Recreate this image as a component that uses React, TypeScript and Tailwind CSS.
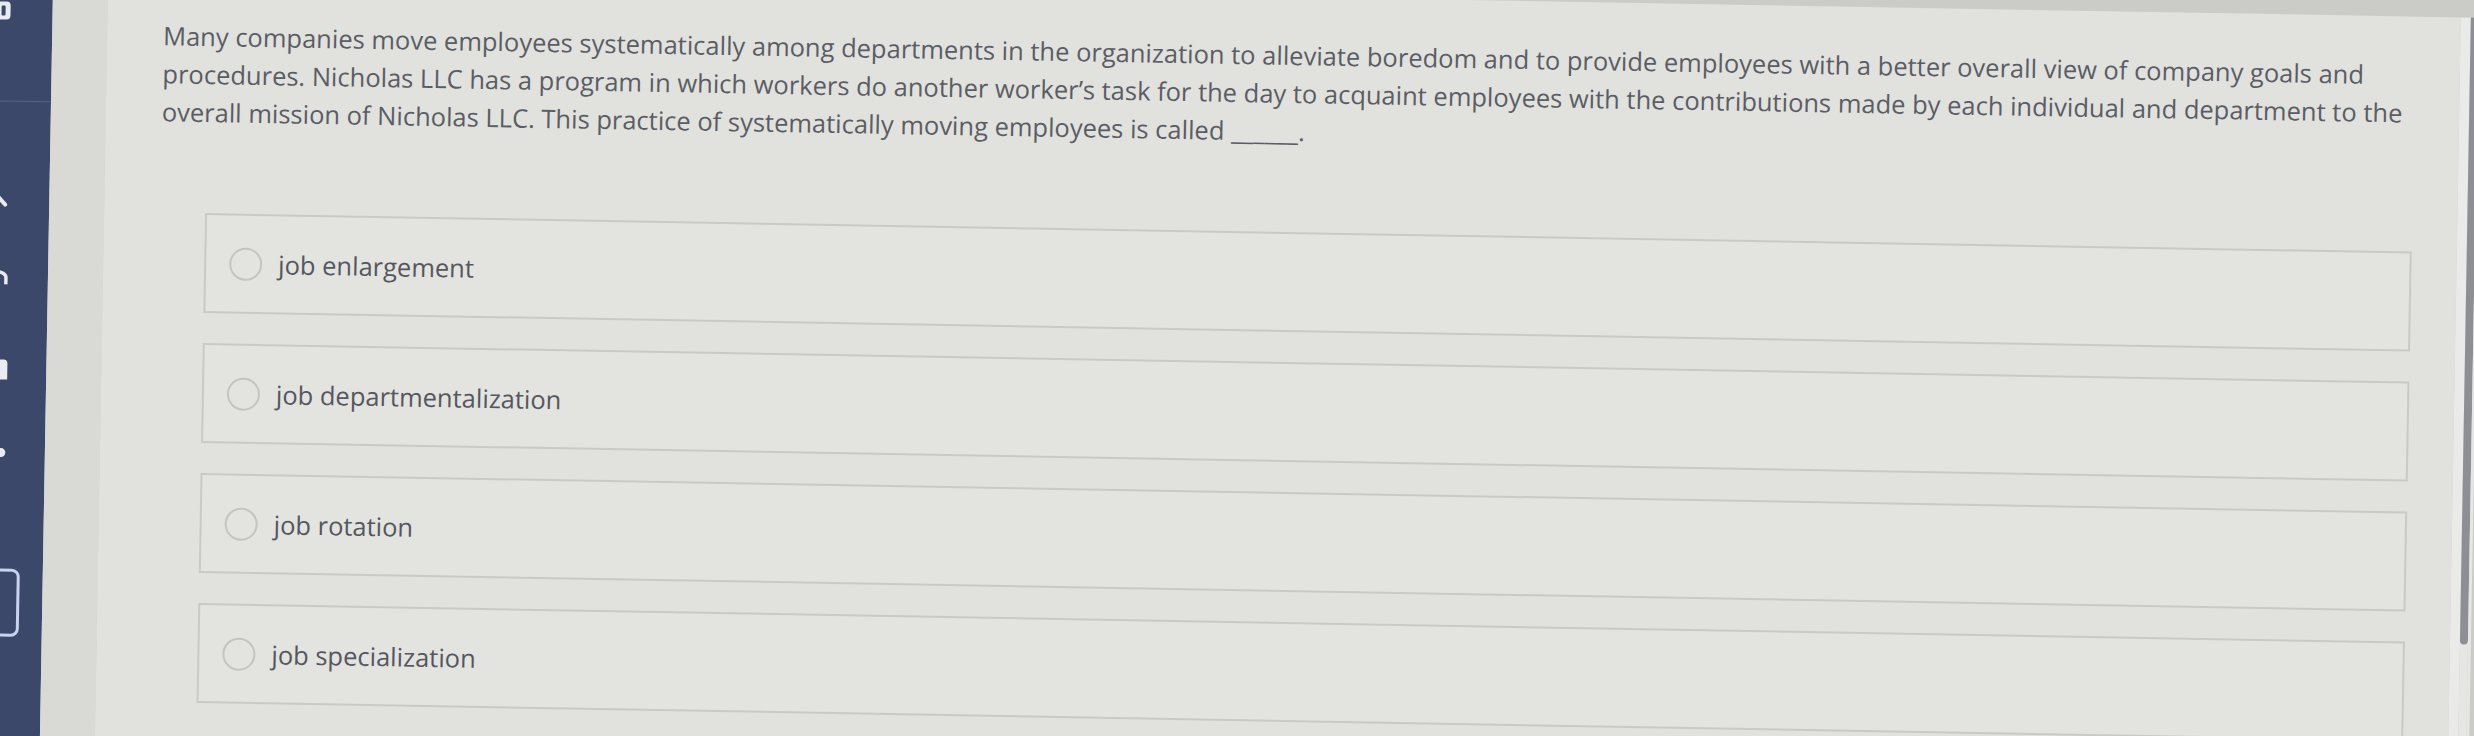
const options = [
  'job enlargement',
  'job departmentalization',
  'job rotation',
  'job specialization',
];

function Sidebar() {
  return (
    <nav className="flex w-[93px] shrink-0 flex-col bg-[#3b486a]">
      <div className="h-[127px] border-b border-[#56648a] pt-[26px]">
        <svg className="ml-[28px]" width="24" height="20" viewBox="0 0 24 20">
          <rect x="1" y="1" width="22" height="18" rx="4" fill="#e8ebf2" />
          <rect x="14" y="5" width="4" height="10" rx="1" fill="#3b486a" />
        </svg>
      </div>
      <svg className="ml-[22px] mt-[86px]" width="30" height="20" viewBox="0 0 30 20">
        <path d="M3 17 L15 4 L27 17" fill="none" stroke="#e8ebf2" strokeWidth="4" strokeLinecap="round" />
      </svg>
      <svg className="ml-[28px] mt-[61px]" width="26" height="16" viewBox="0 0 26 16">
        <path d="M3 16 V9 a10 6 0 0 1 20 0 V16" fill="none" stroke="#e8ebf2" strokeWidth="3.5" />
      </svg>
      <svg className="ml-[34px] mt-[71px]" width="22" height="28" viewBox="0 0 22 28">
        <path d="M2 4 H16 a4 4 0 0 1 4 4 V24 H12 V12 H2 Z" fill="#e8ebf2" />
      </svg>
      <svg className="ml-[44px] mt-[61px]" width="10" height="16" viewBox="0 0 10 16">
        <circle cx="5" cy="8" r="4.5" fill="#e8ebf2" />
      </svg>
      <div className="ml-[20px] mt-[108px] h-[68px] w-[50px] rounded-[8px] border-[3px] border-[#c9d3ee]" />
    </nav>
  );
}

function Option({ label }: { label: string }) {
  return (
    <label className="flex h-[100px] items-center border-2 border-[#c9c9c7] bg-[#e3e3e0] pl-[23px]">
      <span className="h-[33px] w-[33px] shrink-0 rounded-full border-2 border-[#c4c4c2]" />
      <span className="ml-[16px] text-[25.5px] text-[#55575f]">{label}</span>
    </label>
  );
}

export default function App() {
  return (
    <div className="relative h-[736px] w-[2474px] overflow-hidden bg-[#cbcbc8] font-['Open_Sans',sans-serif]">
      <div className="-ml-[40px] flex h-[800px] w-[2522px] origin-[1505px_0px] rotate-[1deg]">
        <Sidebar />
        <div className="w-[55px] shrink-0 bg-[#d9d9d6]" />
        <main className="flex-1 bg-[#e1e1de] pr-[45px] pt-[39px]">
          <p className="whitespace-nowrap pl-[56px] text-[25.5px] leading-[38px] text-[#5b5d65]">
            Many companies move employees systematically among departments in the organization to alleviate boredom and to provide employees with a better overall view of company goals and
            <br />
            procedures. Nicholas LLC has a program in which workers do another worker’s task for the day to acquaint employees with the contributions made by each individual and department to the
            <br />
            overall mission of Nicholas LLC. This practice of systematically moving employees is called ______.
          </p>
          <div className="mt-[82px] flex flex-col gap-[30px] pl-[101px]">
            {options.map((o) => (
              <Option key={o} label={o} />
            ))}
          </div>
        </main>
        <div className="w-[10px] shrink-0 bg-[#eaeae8]" />
        <div className="w-[8px] shrink-0 bg-[#e6e6e4]">
          <div className="h-[627px] rounded-b-[4px] bg-[#8d8f95]" />
        </div>
        <div className="w-[3px] shrink-0 bg-[#e6e6e4]" />
      </div>
    </div>
  );
}
